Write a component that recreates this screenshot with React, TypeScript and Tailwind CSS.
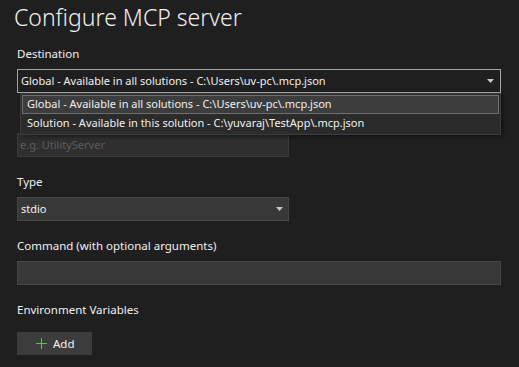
import React from 'react';

const font = { fontFamily: '"Segoe UI", "Noto Sans", sans-serif' };

function Caret() {
    return (
        <svg width="7" height="4" viewBox="0 0 7 4" className="shrink-0">
            <path d="M0 0h7L3.5 4z" fill="#c8c8c8" />
        </svg>
    );
}

function FieldLabel({ children }: { children?: React.ReactNode }) {
    return <div className="h-4 text-[11.5px] leading-4 text-[#f0f0f0]">{children}</div>;
}

export default function App(): JSX.Element {
    const destinations = [
        'Global - Available in all solutions - C:\\Users\\uv-pc\\.mcp.json',
        'Solution - Available in this solution - C:\\yuvaraj\\TestApp\\.mcp.json',
    ];

    return (
        <div
            className="h-[367px] w-[519px] overflow-hidden bg-[#1f1f1f] pl-[17px] pr-[18px] text-[#f0f0f0]"
            style={font}
        >
            <div className="-ml-[3px] pt-[2px] text-[23px] font-light leading-[30px] text-[#f0f0f0]">
                Configure MCP server
            </div>

            <div className="mt-[14px]">
                <FieldLabel>Destination</FieldLabel>
                <div className="relative mt-[7px]">
                    <div className="flex h-6 items-center justify-between border border-[#a6a6a6] bg-[#1f1f1f] pl-[3px] pr-[6px] text-[11px]">
                        <span>{destinations[0]}</span>
                        <Caret />
                    </div>
                    <div className="absolute left-[3px] right-0 top-6 z-10 border border-[#3c3c3c] bg-[#2b2b2b] p-[1px] shadow-[2px_2px_4px_rgba(0,0,0,0.4)]">
                        <div className="flex h-[19px] items-center border border-[#6e6e6e] bg-[#3d3d3d] pl-[4px] text-[11px]">
                            {destinations[0]}
                        </div>
                        <div className="flex h-[19px] items-center pl-[5px] text-[11px]">
                            {destinations[1]}
                        </div>
                    </div>
                </div>
            </div>

            <div className="mt-[17px]">
                <FieldLabel />
                <div className="mt-[7px] flex h-6 w-[272px] items-center border border-[#3a3a3a] bg-[#2f2f2f] pl-[2px] text-[11px] text-[#5c5c5c]">
                    e.g. UtilityServer
                </div>
            </div>

            <div className="mt-[17px]">
                <FieldLabel>Type</FieldLabel>
                <div className="mt-[7px] flex h-6 w-[272px] items-center justify-between border border-[#464646] bg-[#383838] pl-[3px] pr-[5px] text-[11px]">
                    <span>stdio</span>
                    <Caret />
                </div>
            </div>

            <div className="mt-[17px]">
                <FieldLabel>Command (with optional arguments)</FieldLabel>
                <div className="mt-[7px] h-6 border border-[#464646] bg-[#383838]" />
            </div>

            <div className="mt-[17px]">
                <FieldLabel>Environment Variables</FieldLabel>
                <button className="mt-[14px] flex h-[23px] w-[75px] items-center gap-[6px] bg-[#3c3c3c] pl-[19px] text-[11.5px] text-[#f0f0f0]">
                    <svg width="11" height="11" viewBox="0 0 11 11" shapeRendering="crispEdges">
                        <path d="M5 0h1v11H5zM0 5h11v1H0z" fill="#5fc14f" />
                    </svg>
                    <span>Add</span>
                </button>
            </div>
        </div>
    );
}
